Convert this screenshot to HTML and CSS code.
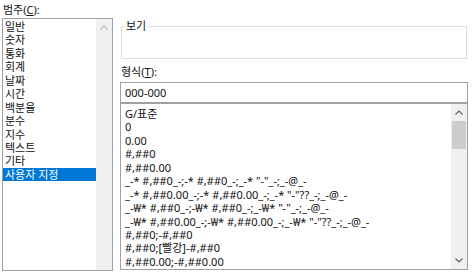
FILE: index.html
```html
<!DOCTYPE html>
<html lang="ko">
<head>
<meta charset="utf-8">
<title>셀 서식 - 표시 형식</title>
<link rel="stylesheet" href="styles.css">
</head>
<body>
<div class="dialog">
  <div class="left">
    <div class="label">범주(<u>C</u>):</div>
    <div class="listbox cat">
      <ul class="items">
        <li>일반</li>
        <li>숫자</li>
        <li>통화</li>
        <li>회계</li>
        <li>날짜</li>
        <li>시간</li>
        <li>백분율</li>
        <li>분수</li>
        <li>지수</li>
        <li>텍스트</li>
        <li>기타</li>
        <li class="sel">사용자 지정</li>
      </ul>
      <div class="vscroll disabled">
        <div class="arrow"><svg width="8" height="5" viewBox="0 0 8 5"><polyline points="0.5,4.5 4,1 7.5,4.5" fill="none" stroke="currentColor" stroke-width="1.2"/></svg></div>
      </div>
    </div>
  </div>
  <div class="right">
    <fieldset class="preview">
      <legend>보기</legend>
      <div class="preview-body"></div>
    </fieldset>
    <div class="label fmt-label">형식(<u>T</u>):</div>
    <div class="input">000-000</div>
    <div class="listbox fmt">
      <ul class="items">
        <li>G/표준</li>
        <li>0</li>
        <li>0.00</li>
        <li>#,##0</li>
        <li>#,##0.00</li>
        <li>_-* #,##0_-;-* #,##0_-;_-* "-"_-;_-@_-</li>
        <li>_-* #,##0.00_-;-* #,##0.00_-;_-* "-"??_-;_-@_-</li>
        <li>_-₩* #,##0_-;-₩* #,##0_-;_-₩* "-"_-;_-@_-</li>
        <li>_-₩* #,##0.00_-;-₩* #,##0.00_-;_-₩* "-"??_-;_-@_-</li>
        <li>#,##0;-#,##0</li>
        <li>#,##0;[빨강]-#,##0</li>
        <li>#,##0.00;-#,##0.00</li>
      </ul>
      <div class="vscroll">
        <div class="arrow"><svg width="8" height="5" viewBox="0 0 8 5"><polyline points="0.5,4.5 4,1 7.5,4.5" fill="none" stroke="currentColor" stroke-width="1.2"/></svg></div>
        <div class="thumb"></div>
        <div class="track"></div>
        <div class="arrow"><svg width="8" height="5" viewBox="0 0 8 5"><polyline points="0.5,0.5 4,4 7.5,0.5" fill="none" stroke="currentColor" stroke-width="1.2"/></svg></div>
      </div>
    </div>
  </div>
</div>
</body>
</html>
```

FILE: styles.css
```css
html, body {
  margin: 0;
  background: #ffffff;
}
body {
  font-family: "Noto Sans", "Noto Sans CJK KR", sans-serif;
  font-size: 11px;
  color: #111111;
}
.dialog {
  display: flex;
  height: 275px;
  overflow: hidden;
}
.label {
  line-height: 14px;
  white-space: nowrap;
}
.label u {
  text-decoration: underline;
  text-underline-offset: 1px;
}
.left {
  width: 111px;
  padding-left: 2px;
  display: flex;
  flex-direction: column;
  flex: none;
}
.left .label {
  padding: 3px 0 0 1px;
  height: 18px;
  box-sizing: border-box;
}
.listbox {
  display: flex;
  box-sizing: border-box;
  border: 1px solid #a0a0a0;
  background: #ffffff;
  overflow: hidden;
}
.listbox.cat {
  width: 111px;
  height: 253px;
}
.items {
  flex: 1;
  margin: 0;
  list-style: none;
  min-width: 0;
}
.items li {
  line-height: 13.45px;
  height: 13.45px;
  white-space: nowrap;
}
.cat .items {
  padding: 1px 0 0 0;
}
.cat .items li {
  padding-left: 2px;
}
.cat .items li.sel {
  background: #0078d7;
  color: #ffffff;
}
.vscroll {
  width: 16px;
  flex: none;
  background: #f0f0f0;
  display: flex;
  flex-direction: column;
  color: #606060;
}
.vscroll.disabled {
  color: #bfbfbf;
}
.arrow {
  height: 17px;
  flex: none;
  display: flex;
  align-items: center;
  justify-content: center;
}
.arrow svg {
  display: block;
}
.thumb {
  height: 28px;
  margin: 0 1px;
  background: #cdcdcd;
  flex: none;
}
.track {
  flex: 1;
}
.right {
  margin-left: 7px;
  width: 348px;
  padding-top: 19px;
  flex: none;
}
.preview {
  margin: 0 0 0 1px;
  padding: 0;
  width: 346px;
  box-sizing: border-box;
  border: 1px solid #dcdcdc;
}
.preview legend {
  padding: 0 2px;
  margin-left: 2px;
  line-height: 14px;
}
.preview-body {
  height: 25px;
}
.fmt-label {
  margin-top: 6px;
  padding-left: 1px;
}
.input {
  margin-top: 3px;
  height: 21px;
  box-sizing: border-box;
  border: 1px solid #a0a0a0;
  padding-left: 4px;
  line-height: 19px;
}
.listbox.fmt {
  height: 167px;
}
.fmt .items {
  padding: 3px 0 0 4px;
}
```
